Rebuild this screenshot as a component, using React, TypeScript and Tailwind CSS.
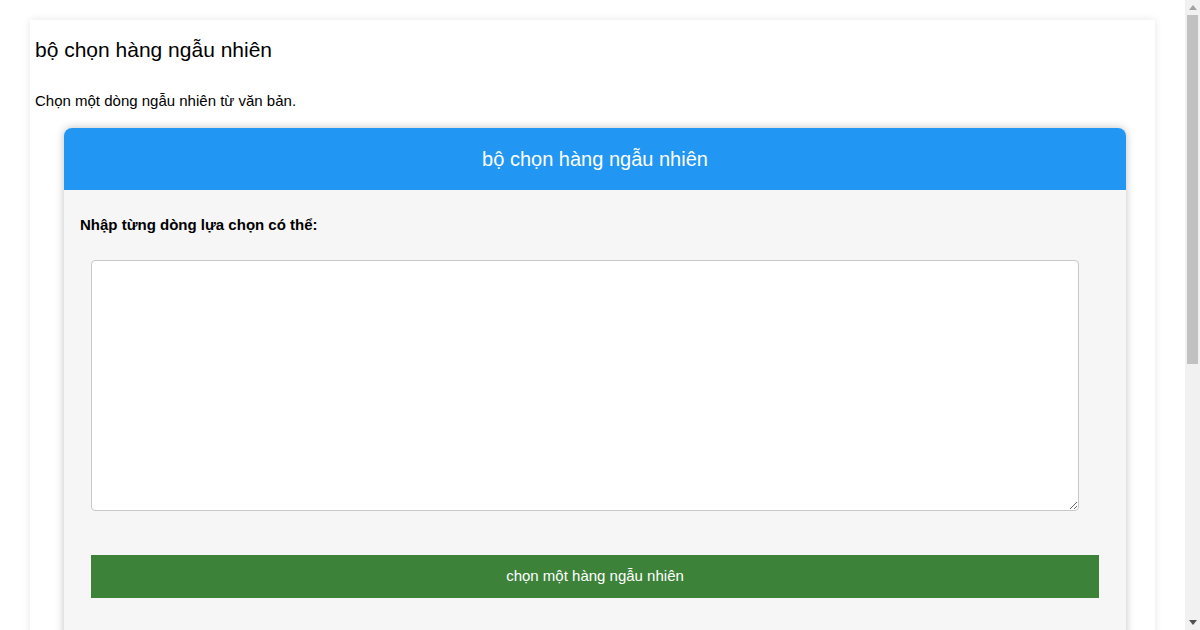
import React from 'react';

function FakeScrollbar() {
  return (
    <div className="sticky top-0 flex h-screen w-[15px] shrink-0 flex-col bg-[#f1f1f1]">
      <div className="flex h-[15px] items-center justify-center">
        <svg width="8" height="5" viewBox="0 0 8 5"><path d="M0 5 L4 0 L8 5 Z" fill="#a3a3a3" /></svg>
      </div>
      <div className="mx-[2px] h-[349px] bg-[#c1c1c1]" />
      <div className="flex-1" />
      <div className="flex h-[15px] items-center justify-center">
        <svg width="8" height="5" viewBox="0 0 8 5"><path d="M0 0 L8 0 L4 5 Z" fill="#505050" /></svg>
      </div>
    </div>
  );
}

export default function App() {
  return (
    <div className="flex bg-white font-['Liberation_Sans',Arial,sans-serif] text-black">
      <main className="flex-1 pb-10">
        <div className="mx-[30px] mt-[20px] bg-white px-[5px] pt-[18px] pb-[300px] shadow-[0_0_8px_rgba(0,0,0,0.1)]">
          <h1 className="text-[21px] leading-[24px]">bộ chọn hàng ngẫu nhiên</h1>
          <p className="mt-[30px] text-[15px] leading-[17px]">Chọn một dòng ngẫu nhiên từ văn bản.</p>

          <div className="mt-[19px] ml-[29px] w-[1062px] overflow-hidden rounded-t-[8px] bg-[#f6f6f6] shadow-[0_0_8px_rgba(0,0,0,0.25)]">
            <div className="flex h-[62px] items-center justify-center bg-[#2196f3] text-[20px] text-white">
              bộ chọn hàng ngẫu nhiên
            </div>
            <div className="px-4 pt-[26px] pb-[60px]">
              <label className="block text-[15px] leading-[17px] font-bold">Nhập từng dòng lựa chọn có thể:</label>
              <div className="px-[11px]">
                <textarea className="mt-[27px] block h-[251px] w-[988px] rounded-[4px] border border-[#c8c8c8] bg-white p-2 text-[15px]" />
                <button className="mt-[44px] block h-[43px] w-full bg-[#3c8239] text-[15px] text-white">
                  chọn một hàng ngẫu nhiên
                </button>
              </div>
            </div>
          </div>
        </div>
      </main>
      <FakeScrollbar />
    </div>
  );
}
